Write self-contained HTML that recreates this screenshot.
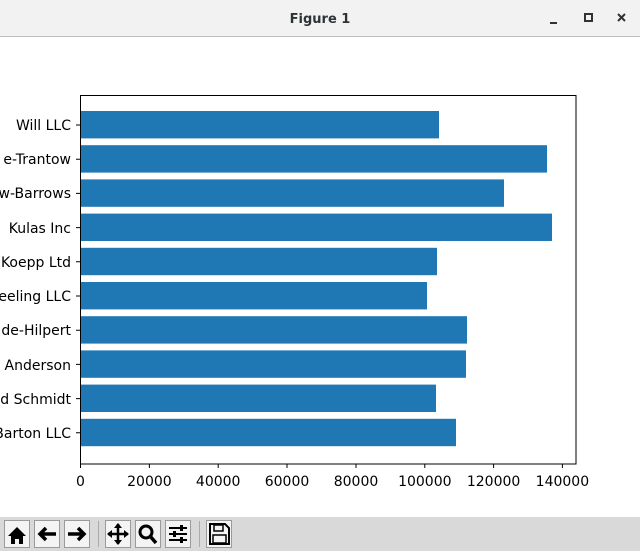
<!DOCTYPE html>
<html><head><style>
body{margin:0;width:640px;height:551px;overflow:hidden;background:#fff;font-family:"DejaVu Sans","Liberation Sans",sans-serif;}
</style></head><body>
<svg width="640" height="551" xmlns="http://www.w3.org/2000/svg" font-family="DejaVu Sans, Liberation Sans, sans-serif">
<rect x="0" y="0" width="640" height="36" fill="#f2f2f2"/>
<line x1="0" y1="36.5" x2="640" y2="36.5" stroke="#bdbdbd"/>
<text x="320" y="23" font-size="13" font-weight="bold" text-anchor="middle" fill="#2e3436">Figure 1</text>
<rect x="550" y="22" width="7" height="2" fill="#2e3436"/>
<rect x="585" y="14" width="7" height="7" fill="none" stroke="#2e3436" stroke-width="2"/>
<path d="M618 14 L625 21 M625 14 L618 21" stroke="#2e3436" stroke-width="2"/>
<g fill="#1f77b4">
<rect x="80.5" y="111" width="358.5" height="27.4"/>
<rect x="80.5" y="145.2" width="466.5" height="27.4"/>
<rect x="80.5" y="179.4" width="423.5" height="27.4"/>
<rect x="80.5" y="213.6" width="471.5" height="27.4"/>
<rect x="80.5" y="247.8" width="356.5" height="27.4"/>
<rect x="80.5" y="282" width="346.5" height="27.4"/>
<rect x="80.5" y="316.2" width="386.5" height="27.4"/>
<rect x="80.5" y="350.4" width="385.5" height="27.4"/>
<rect x="80.5" y="384.6" width="355.5" height="27.4"/>
<rect x="80.5" y="418.8" width="375.5" height="27.4"/>
</g>
<rect x="80.5" y="95.5" width="495.5" height="368.5" fill="none" stroke="#000" stroke-width="1"/>
<g font-size="14" fill="#000" text-anchor="end">
<text x="71" y="130">Will LLC</text>
<text x="71" y="164">e-Trantow</text>
<text x="71" y="198">w-Barrows</text>
<text x="71" y="233">Kulas Inc</text>
<text x="71" y="267">Koepp Ltd</text>
<text x="71" y="301">eeling LLC</text>
<text x="71" y="335">de-Hilpert</text>
<text x="71" y="370">Anderson</text>
<text x="71" y="404">d Schmidt</text>
<text x="71" y="438">Barton LLC</text>
</g>
<g stroke="#000">
<path d="M76 125h4M76 159.2h4M76 193.4h4M76 227.6h4M76 261.8h4M76 296h4M76 330.2h4M76 364.4h4M76 398.6h4M76 432.8h4"/>
<path d="M80.5 464v4M149.4 464v4M218.2 464v4M287 464v4M356 464v4M424.8 464v4M493.6 464v4M562.4 464v4"/>
</g>
<g font-size="14" fill="#000" text-anchor="middle">
<text x="80.5" y="486">0</text><text x="149.4" y="486">20000</text><text x="218.2" y="486">40000</text><text x="287" y="486">60000</text><text x="356" y="486">80000</text><text x="424.8" y="486">100000</text><text x="493.6" y="486">120000</text><text x="562.4" y="486">140000</text>
</g>
<rect x="0" y="517" width="640" height="34" fill="#d9d9d9"/>
<g fill="#f4f4f4" stroke="#9a9a9a">
<rect x="4.5" y="520.5" width="25" height="27"/><rect x="34.5" y="520.5" width="25" height="27"/><rect x="64.5" y="520.5" width="25" height="27"/>
<rect x="105.5" y="520.5" width="25" height="27"/><rect x="135.5" y="520.5" width="25" height="27"/><rect x="165.5" y="520.5" width="25" height="27"/>
<rect x="206.5" y="520.5" width="25" height="27"/>
</g>
<path d="M98.5 521v26M199.5 521v26" stroke="#aaa"/>
<path d="M8 536 L17 527 L26 536 L23 536 L23 544 L19 544 L19 539 L15 539 L15 544 L11 544 L11 536Z" fill="#000"/>
<path d="M56 534H41 M46 528L40 534L46 540" stroke="#000" stroke-width="3.5" fill="none"/>
<path d="M68 534H83 M78 528L84 534L78 540" stroke="#000" stroke-width="3.5" fill="none"/>
<path d="M118 524V544M108 534H128" stroke="#000" stroke-width="2.5"/>
<path d="M114 528L118 523L122 528ZM114 540L118 545L122 540ZM112 530L107 534L112 538ZM124 530L129 534L124 538Z" fill="#000"/>
<circle cx="146" cy="532" r="6" stroke="#000" stroke-width="3" fill="none"/>
<path d="M150 536L156 543" stroke="#000" stroke-width="3.5"/>
<path d="M169 528H187M169 534H187M169 540H187" stroke="#000" stroke-width="2"/>
<rect x="180" y="525" width="3" height="6" fill="#000"/><rect x="173" y="531" width="3" height="6" fill="#000"/><rect x="180" y="537" width="3" height="6" fill="#000"/>
<path d="M210 524H225L229 528V544H210Z" fill="none" stroke="#000" stroke-width="2"/>
<rect x="214" y="525" width="9" height="6" fill="none" stroke="#000" stroke-width="1.5"/>
<rect x="213" y="535" width="13" height="8" fill="none" stroke="#000" stroke-width="1.5"/>
</svg>
</body></html>
